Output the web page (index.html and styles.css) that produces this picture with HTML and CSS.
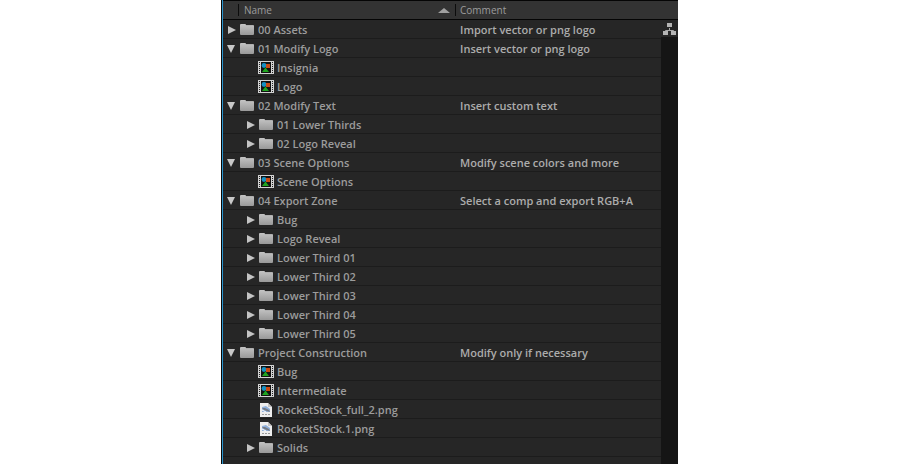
FILE: index.html
```html
<!DOCTYPE html>
<html lang="en">
<head>
    <meta charset="UTF-8">
    <meta name="viewport" content="width=device-width, initial-scale=1.0">
    <title>Project</title>
    <link rel="stylesheet" href="styles.css">
</head>
<body>
    <!-- Icon set -->
    <svg class="sprite" aria-hidden="true">
        <defs>
            <linearGradient id="folderFill" x1="0" y1="0" x2="0" y2="1">
                <stop offset="0" stop-color="#c4c4c4"/>
                <stop offset="1" stop-color="#999999"/>
            </linearGradient>
        </defs>
        <symbol id="right" viewBox="0 0 12 12">
            <path d="M3 2L11 6L3 10Z" fill="#c4c4c4"/>
        </symbol>
        <symbol id="down" viewBox="0 0 12 12">
            <path d="M2 2H10L6 10Z" fill="#c8c8c8"/>
        </symbol>
        <symbol id="folder" viewBox="0 0 16 14">
            <path d="M1 2Q1 1 2 1H6Q7 1 7 2H14Q15 2 15 3V11Q15 12 14 12H2Q1 12 1 11Z" fill="url(#folderFill)"/>
            <path d="M7 2.500H14" stroke="#b0b0b0" fill="none"/>
        </symbol>
        <symbol id="comp" viewBox="0 0 16 14">
            <path d="M0 0H16V13H0Z" fill="#d2d2d2"/>
            <path d="M3 1H13V12H3Z" fill="#111111"/>
            <path d="M1 1h1v1h-1zM1 3h1v1h-1zM1 5h1v1h-1zM1 7h1v1h-1zM1 9h1v1h-1zM1 11h1v1h-1zM14 1h1v1h-1zM14 3h1v1h-1zM14 5h1v1h-1zM14 7h1v1h-1zM14 9h1v1h-1zM14 11h1v1h-1z" fill="#222222"/>
            <circle cx="6" cy="4.500" r="2.400" fill="#168fc2"/>
            <path d="M8 3H12V7H8Z" fill="#c84a14"/>
            <path d="M7.500 6.500L11 11H4Z" fill="#1fa51f"/>
        </symbol>
        <symbol id="png" viewBox="0 0 16 14">
            <path d="M2 0H10L14 4V14H2Z" fill="#eeeeee"/>
            <path d="M10 0V4H14Z" fill="#c4c4c4"/>
            <path d="M4 4L8 3L12 6V9H4Z" fill="#8fb0dc"/>
            <path d="M4 5L7 5L11 7L12 9L9 8L6 7Z" fill="#777b82"/>
            <path d="M4 7L8 9" stroke="#ffffff" fill="none"/>
            <path d="M4 11.500H6M7 11.500H9M10 11.500H12" stroke="#999999" fill="none"/>
        </symbol>
    </svg>

    <main class="panel">
        <table class="project">
            <colgroup>
                <col class="col-name">
                <col class="col-comment">
                <col class="col-rail">
            </colgroup>
            <thead>
                <tr>
                    <th scope="col" aria-sort="ascending">
                        <div class="heading name-heading">Name
                            <svg class="sort" viewBox="0 0 12 5" aria-hidden="true"><path d="M0 5L6 0L12 5Z" fill="#a0a0a0"/></svg>
                        </div>
                    </th>
                    <th scope="col"><div class="heading">Comment</div></th>
                    <td></td>
                </tr>
            </thead>
            <tbody>
                <tr>
                    <td><div class="item"><button class="toggle" aria-expanded="false" aria-label="Expand 00 Assets"><svg><use href="#right"/></svg></button><svg class="icon"><use href="#folder"/></svg>00 Assets</div></td>
                    <td class="comment">Import vector or png logo</td>
                    <td class="rail" rowspan="24">
                        <button class="flowchart" aria-label="Project flowchart">
                            <svg viewBox="0 0 17 18">
                                <path d="M8.500 8V11M4.500 14V10.500H12.500V14" stroke="#a8a8a8" fill="none"/>
                                <path d="M6 3H11V7H6ZM2 11H7V15H2ZM10 11H15V15H10Z" fill="#b4b4b4"/>
                            </svg>
                        </button>
                    </td>
                </tr>
                <tr>
                    <td><div class="item"><button class="toggle" aria-expanded="true" aria-label="Collapse 01 Modify Logo"><svg><use href="#down"/></svg></button><svg class="icon"><use href="#folder"/></svg>01 Modify Logo</div></td>
                    <td class="comment">Insert vector or png logo</td>
                </tr>
                <tr>
                    <td><div class="item child file"><svg class="icon"><use href="#comp"/></svg>Insignia</div></td>
                    <td></td>
                </tr>
                <tr>
                    <td><div class="item child file"><svg class="icon"><use href="#comp"/></svg>Logo</div></td>
                    <td></td>
                </tr>
                <tr>
                    <td><div class="item"><button class="toggle" aria-expanded="true" aria-label="Collapse 02 Modify Text"><svg><use href="#down"/></svg></button><svg class="icon"><use href="#folder"/></svg>02 Modify Text</div></td>
                    <td class="comment">Insert custom text</td>
                </tr>
                <tr>
                    <td><div class="item child"><button class="toggle" aria-expanded="false" aria-label="Expand 01 Lower Thirds"><svg><use href="#right"/></svg></button><svg class="icon"><use href="#folder"/></svg>01 Lower Thirds</div></td>
                    <td></td>
                </tr>
                <tr>
                    <td><div class="item child"><button class="toggle" aria-expanded="false" aria-label="Expand 02 Logo Reveal"><svg><use href="#right"/></svg></button><svg class="icon"><use href="#folder"/></svg>02 Logo Reveal</div></td>
                    <td></td>
                </tr>
                <tr>
                    <td><div class="item"><button class="toggle" aria-expanded="true" aria-label="Collapse 03 Scene Options"><svg><use href="#down"/></svg></button><svg class="icon"><use href="#folder"/></svg>03 Scene Options</div></td>
                    <td class="comment">Modify scene colors and more</td>
                </tr>
                <tr>
                    <td><div class="item child file"><svg class="icon"><use href="#comp"/></svg>Scene Options</div></td>
                    <td></td>
                </tr>
                <tr>
                    <td><div class="item"><button class="toggle" aria-expanded="true" aria-label="Collapse 04 Export Zone"><svg><use href="#down"/></svg></button><svg class="icon"><use href="#folder"/></svg>04 Export Zone</div></td>
                    <td class="comment">Select a comp and export RGB+A</td>
                </tr>
                <tr>
                    <td><div class="item child"><button class="toggle" aria-expanded="false" aria-label="Expand Bug"><svg><use href="#right"/></svg></button><svg class="icon"><use href="#folder"/></svg>Bug</div></td>
                    <td></td>
                </tr>
                <tr>
                    <td><div class="item child"><button class="toggle" aria-expanded="false" aria-label="Expand Logo Reveal"><svg><use href="#right"/></svg></button><svg class="icon"><use href="#folder"/></svg>Logo Reveal</div></td>
                    <td></td>
                </tr>
                <tr>
                    <td><div class="item child"><button class="toggle" aria-expanded="false" aria-label="Expand Lower Third 01"><svg><use href="#right"/></svg></button><svg class="icon"><use href="#folder"/></svg>Lower Third 01</div></td>
                    <td></td>
                </tr>
                <tr>
                    <td><div class="item child"><button class="toggle" aria-expanded="false" aria-label="Expand Lower Third 02"><svg><use href="#right"/></svg></button><svg class="icon"><use href="#folder"/></svg>Lower Third 02</div></td>
                    <td></td>
                </tr>
                <tr>
                    <td><div class="item child"><button class="toggle" aria-expanded="false" aria-label="Expand Lower Third 03"><svg><use href="#right"/></svg></button><svg class="icon"><use href="#folder"/></svg>Lower Third 03</div></td>
                    <td></td>
                </tr>
                <tr>
                    <td><div class="item child"><button class="toggle" aria-expanded="false" aria-label="Expand Lower Third 04"><svg><use href="#right"/></svg></button><svg class="icon"><use href="#folder"/></svg>Lower Third 04</div></td>
                    <td></td>
                </tr>
                <tr>
                    <td><div class="item child"><button class="toggle" aria-expanded="false" aria-label="Expand Lower Third 05"><svg><use href="#right"/></svg></button><svg class="icon"><use href="#folder"/></svg>Lower Third 05</div></td>
                    <td></td>
                </tr>
                <tr>
                    <td><div class="item"><button class="toggle" aria-expanded="true" aria-label="Collapse Project Construction"><svg><use href="#down"/></svg></button><svg class="icon"><use href="#folder"/></svg>Project Construction</div></td>
                    <td class="comment">Modify only if necessary</td>
                </tr>
                <tr>
                    <td><div class="item child file"><svg class="icon"><use href="#comp"/></svg>Bug</div></td>
                    <td></td>
                </tr>
                <tr>
                    <td><div class="item child file"><svg class="icon"><use href="#comp"/></svg>Intermediate</div></td>
                    <td></td>
                </tr>
                <tr>
                    <td><div class="item child file"><svg class="icon"><use href="#png"/></svg>RocketStock_full_2.png</div></td>
                    <td></td>
                </tr>
                <tr>
                    <td><div class="item child file"><svg class="icon"><use href="#png"/></svg>RocketStock.1.png</div></td>
                    <td></td>
                </tr>
                <tr>
                    <td><div class="item child"><button class="toggle" aria-expanded="false" aria-label="Expand Solids"><svg><use href="#right"/></svg></button><svg class="icon"><use href="#folder"/></svg>Solids</div></td>
                    <td></td>
                </tr>
                <tr class="filler">
                    <td></td>
                    <td></td>
                </tr>
            </tbody>
        </table>
    </main>
</body>
</html>
```
FILE: styles.css
```css
* {
    margin: 0;
    padding: 0;
    box-sizing: border-box;
}

body {
    display: grid;
    grid-template-columns: 221fr 457fr 223fr;
    min-height: 100vh;
    background: white;
    color: #9c9c9c;
    font-family: "Open Sans", "Noto Sans", sans-serif;
    font-size: 11px;
    font-weight: 600;
    line-height: 16px;
}

.sprite {
    position: absolute;
    width: 0;
    height: 0;
}

.panel {
    grid-column: 2;
    display: flex;
    background: #262626;
    border-left: 1px solid #080808;
}

.project {
    width: 100%;
    height: 100vh;
    table-layout: fixed;
    border-collapse: separate;
    border-spacing: 0;
    border-left: 1px solid #2a94cc;
}

.col-name {
    width: 51%;
}

.col-rail {
    width: 17px;
}

.project thead tr {
    height: 20px;
    background: #333333;
}

.project thead th,
.project thead td {
    border-top: 1px solid #050505;
    border-bottom: 1px solid #050505;
    font-size: 10px;
    font-weight: 500;
    text-align: left;
}

.heading {
    display: flex;
    align-items: center;
    height: 12px;
    padding-left: 4px;
    border-left: 1px solid #0c0c0c;
}

.name-heading {
    margin-left: 15px;
    padding-left: 5px;
}

.sort {
    width: 12px;
    height: 5px;
    margin-left: auto;
    margin-right: 5px;
}

.project tbody tr {
    height: 19px;
}

.project tbody td {
    border-bottom: 1px solid #1c1c1c;
    white-space: nowrap;
}

.item {
    display: flex;
    align-items: center;
    height: 18px;
    padding-top: 2px;
    padding-left: 2px;
}

.child {
    padding-left: 21px;
}

.file {
    padding-left: 35px;
}

.toggle {
    width: 12px;
    height: 12px;
    margin-right: 2px;
    border: none;
    background: none;
    cursor: pointer;
}

.toggle svg {
    display: block;
    width: 12px;
    height: 12px;
}

.icon {
    width: 16px;
    height: 14px;
    margin-right: 3px;
}

.project .comment {
    padding-top: 2px;
    padding-left: 5px;
    color: #acacac;
}

.project tbody .rail {
    background: #151515;
    border-bottom: none;
    vertical-align: top;
}

.flowchart {
    display: block;
    width: 100%;
    height: 17px;
    border: none;
    background: #262626;
    cursor: pointer;
}

.flowchart svg {
    display: block;
    width: 17px;
    height: 18px;
}

.project tbody .filler {
    height: auto;
}

.project .filler td {
    border-bottom: none;
}
```
